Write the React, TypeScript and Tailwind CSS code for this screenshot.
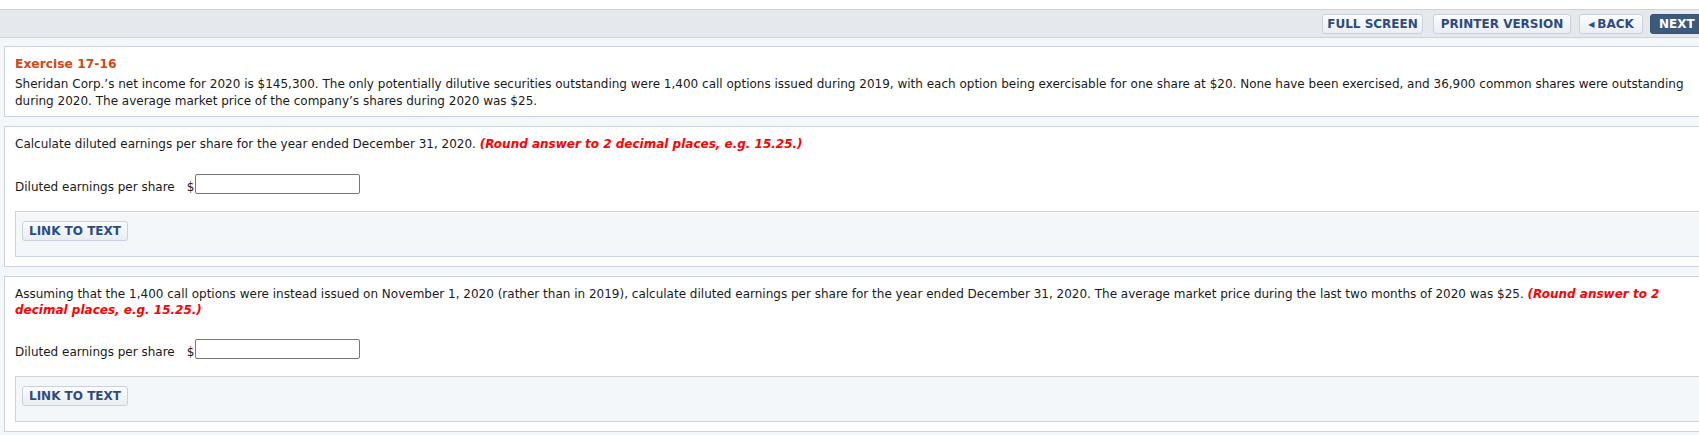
import React from "react";

const font = { fontFamily: '"DejaVu Sans", Verdana, sans-serif' };

function ToolButton({ children, dark, className }: { children: React.ReactNode; dark?: boolean; className: string }) {
  return (
    <button
      className={
        (dark
          ? "h-[20px] rounded-[3px] border border-[#3a5574] bg-[#3d5a7a] text-white text-[12px] font-bold leading-none "
          : "h-[20px] rounded-[3px] border border-[#c9d1dc] bg-gradient-to-b from-[#fbfcfd] to-[#eaeef3] text-[#2c4c80] text-[12px] font-bold leading-none ") +
        className
      }
    >
      {children}
    </button>
  );
}

function LinkBox() {
  return (
    <div className="mx-[10px] border border-[#ccd3dd] bg-[#f4f7fa] px-[6px] pt-[6px] pb-[14px]">
      <button className="w-[106px] h-[20px] rounded-[3px] border border-[#c9d1dc] bg-gradient-to-b from-[#fbfcfd] to-[#e9edf2] text-[#2c4c80] text-[12px] font-bold leading-none">
        LINK TO TEXT
      </button>
    </div>
  );
}

function AnswerRow() {
  return (
    <div className="flex items-end px-[10px] text-[12px] leading-[14px] text-[#1a1a1a]">
      <span>Diluted earnings per share</span>
      <span className="ml-[12px]">$</span>
      <input
        className="ml-[1px] w-[165px] h-[20px] border border-[#777] rounded-[2px] bg-white"
        aria-label="Diluted earnings per share"
      />
    </div>
  );
}

export default function App() {
  return (
    <div className="w-full h-[435px] overflow-hidden bg-[#f4f7fa]" style={font}>
      <div className="w-[1722px]">
        <div className="h-[9px] bg-white" />
        <div className="h-[29px] bg-[#e5e9ee] border-y border-[#ccd3dd] flex items-center justify-end pr-[12px]">
          <ToolButton className="w-[101px]">FULL SCREEN</ToolButton>
          <ToolButton className="ml-[10px] w-[138px]">PRINTER VERSION</ToolButton>
          <ToolButton className="ml-[8px] w-[64px]">
            <span className="text-[8px] mr-[3px] relative -top-[1px]">◀</span>BACK
          </ToolButton>
          <ToolButton dark className="ml-[7px] w-[60px] text-left pl-[8px]">NEXT</ToolButton>
        </div>

        <div className="pl-[4px] pt-[8px] flex flex-col gap-[9px]">
          <div className="border border-[#ccd3dd] bg-white px-[10px] pt-[9px] pb-[7px]">
            <h1 className="text-[12.3px] font-bold text-[#d5470f] leading-[17px]">Exercise 17-16</h1>
            <p className="mt-[3px] w-[1685px] text-[12px] leading-[16.6px] text-[#1a1a1a]">
              Sheridan Corp.’s net income for 2020 is $145,300. The only potentially dilutive securities outstanding were 1,400 call options issued during 2019, with each option being exercisable for one share at $20. None have been exercised, and 36,900 common shares were outstanding during 2020. The average market price of the company’s shares during 2020 was $25.
            </p>
          </div>

          <div className="border border-[#ccd3dd] bg-white pt-[9px] pb-[9px]">
            <p className="px-[10px] text-[12px] leading-[16.6px] text-[#1a1a1a]">
              Calculate diluted earnings per share for the year ended December 31, 2020.{" "}
              <span className="text-[#ff0000] font-bold italic">(Round answer to 2 decimal places, e.g. 15.25.)</span>
            </p>
            <div className="mt-[21px]">
              <AnswerRow />
            </div>
            <div className="mt-[17px]">
              <LinkBox />
            </div>
          </div>

          <div className="border border-[#ccd3dd] bg-white pt-[9px] pb-[9px]">
            <p className="px-[10px] w-[1690px] text-[12px] leading-[16.6px] text-[#1a1a1a]">
              Assuming that the 1,400 call options were instead issued on November 1, 2020 (rather than in 2019), calculate diluted earnings per share for the year ended December 31, 2020. The average market price during the last two months of 2020 was $25.{" "}
              <span className="text-[#ff0000] font-bold italic">(Round answer to 2 decimal places, e.g. 15.25.)</span>
            </p>
            <div className="mt-[20px]">
              <AnswerRow />
            </div>
            <div className="mt-[17px]">
              <LinkBox />
            </div>
          </div>
        </div>
      </div>
    </div>
  );
}
